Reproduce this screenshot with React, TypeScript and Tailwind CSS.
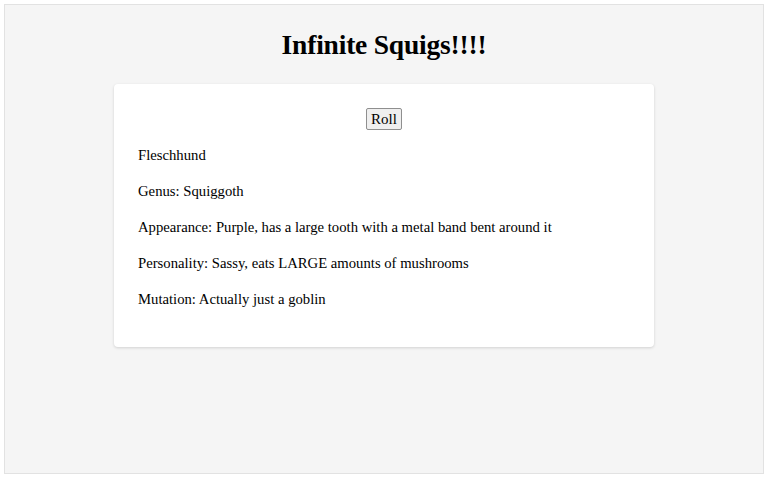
import React, { useState } from "react";

const squig = {
  name: "Fleschhund",
  genus: "Squiggoth",
  appearance: "Purple, has a large tooth with a metal band bent around it",
  personality: "Sassy, eats LARGE amounts of mushrooms",
  mutation: "Actually just a goblin",
};

export default function App() {
  const [s] = useState(squig);
  return (
    <div className="bg-white p-1 min-h-[480px] font-['Liberation_Serif',serif] text-black">
      <div className="border border-[#e2e2e2] bg-[#f5f5f5] min-h-[470px] pt-[21px]">
        <h1 className="text-center text-[27.5px] leading-[37px] font-bold tracking-[-0.2px]">Infinite Squigs!!!!</h1>
        <div className="mx-auto mt-[21px] w-[540px] bg-white rounded-sm shadow-[0_1px_3px_rgba(0,0,0,0.15)] px-6 pt-6 pb-[22px]">
          <div className="flex justify-center">
            <button className="border border-[#8f8f8f] bg-[#efefef] px-[4px] h-[22px] text-[15px] leading-[18px] rounded-[2px]">
              Roll
            </button>
          </div>
          <div className="mt-[15px] flex flex-col gap-4 text-[14.7px] leading-5">
            <p>{s.name}</p>
            <p>Genus: {s.genus}</p>
            <p>Appearance: {s.appearance}</p>
            <p>Personality: {s.personality}</p>
            <p>Mutation: {s.mutation}</p>
          </div>
          <div className="h-4" />
        </div>
      </div>
    </div>
  );
}
